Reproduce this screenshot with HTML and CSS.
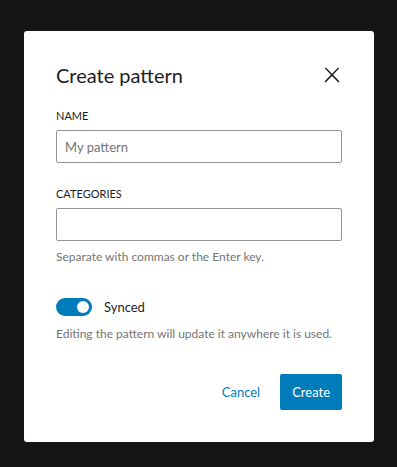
FILE: index.html
```html
<!DOCTYPE html>
<html lang="en">
<head>
  <meta charset="UTF-8">
  <meta name="viewport" content="width=device-width, initial-scale=1.0">
  <title>Create pattern</title>
  <link rel="stylesheet" href="styles.css">
</head>
<body>
  <div class="modal" role="dialog" aria-labelledby="modalTitle">
    <div class="modal-header">
      <h1 id="modalTitle" class="modal-title">Create pattern</h1>
      <button class="close-btn" aria-label="Close">
        <svg width="24" height="24" viewBox="0 0 24 24"><path d="M13 11.8l6.1-6.3-1-1-6.1 6.2-6.1-6.2-1 1 6.1 6.3-6.5 6.7 1 1 6.5-6.6 6.5 6.6 1-1z" fill="#1e1e1e"/></svg>
      </button>
    </div>

    <div class="field">
      <label class="field-label" for="patternName">Name</label>
      <input class="text-input" id="patternName" type="text" placeholder="My pattern">
    </div>

    <div class="field field-cats">
      <label class="field-label" for="patternCats">Categories</label>
      <input class="text-input" id="patternCats" type="text">
      <p class="help">Separate with commas or the Enter key.</p>
    </div>

    <div class="field toggle-field">
      <label class="toggle-row">
        <span class="toggle on"><span class="toggle-thumb"></span></span>
        <span class="toggle-label">Synced</span>
      </label>
      <p class="help">Editing the pattern will update it anywhere it is used.</p>
    </div>

    <div class="actions">
      <button class="btn btn-tertiary">Cancel</button>
      <button class="btn btn-primary">Create</button>
    </div>
  </div>
</body>
</html>
```

FILE: styles.css
```css
body { margin: 0; background: #151515; font-family: Lato, "Noto Sans", sans-serif; color: #1e1e1e; }
.modal { width: 350px; margin: 31px 0 0 24px; box-sizing: border-box; background: #fff; border-radius: 3px; padding: 32px 32px 32px; }
.modal-header { display: flex; align-items: center; justify-content: space-between; height: 24px; }
.modal-title { margin: 0; font-size: 20px; font-weight: 400; line-height: 24px; }
.close-btn { width: 24px; height: 24px; padding: 0; margin-right: -2px; border: none; background: none; display: flex; }
.field { margin-top: 21px; }
.field-cats { margin-top: 23px; }
.field-label { display: block; font-size: 11px; font-weight: 400; line-height: 16px; text-transform: uppercase; margin-bottom: 6px; color: #1e1e1e; }
.text-input { display: block; width: 100%; box-sizing: border-box; height: 33px; padding: 0 8px; border: 1px solid #949494; border-radius: 2px; font-family: inherit; font-size: 13px; color: #1e1e1e; }
.text-input::placeholder { color: #757575; }
.help { margin: 8px 0 0; font-size: 12px; line-height: 16px; color: #757575; }
.toggle-field { margin-top: 33px; }
.toggle-field .help { margin-top: 10px; }
.toggle-row { display: flex; align-items: center; gap: 12px; }
.toggle { width: 36px; height: 18px; border-radius: 9px; background: #007cba; display: flex; align-items: center; justify-content: flex-end; padding: 0 3px; box-sizing: border-box; }
.toggle-thumb { width: 12px; height: 12px; border-radius: 50%; background: #fff; }
.toggle-label { font-size: 13px; line-height: 18px; }
.actions { display: flex; justify-content: flex-end; gap: 8px; margin-top: 32px; }
.btn { height: 36px; padding: 0 12px; border: none; border-radius: 2px; font-family: inherit; font-size: 13px; cursor: pointer; }
.btn-tertiary { background: none; color: #007cba; }
.btn-primary { background: #007cba; color: #fff; }
```
